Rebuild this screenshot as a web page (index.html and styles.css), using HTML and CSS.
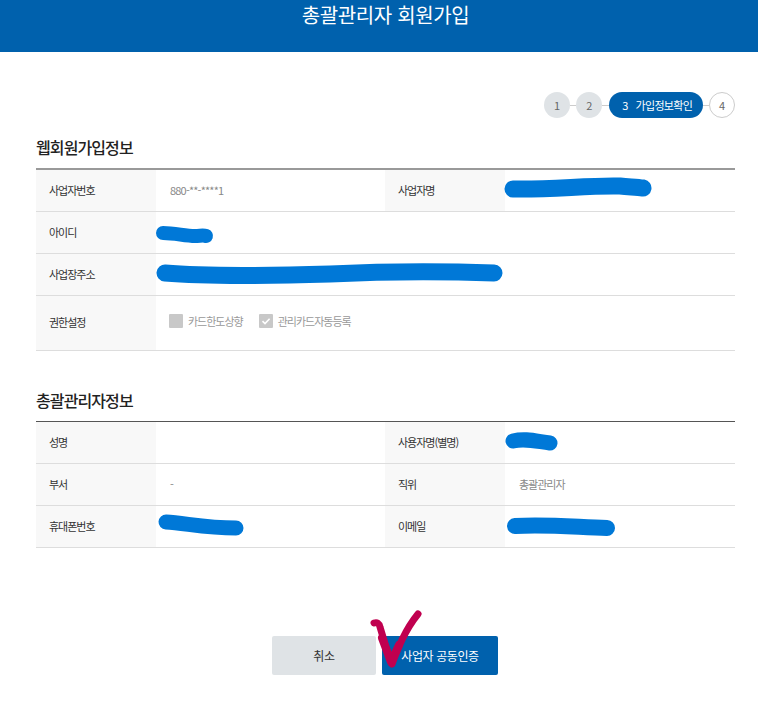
FILE: index.html
```html
<!DOCTYPE html>
<html lang="ko">
<head>
    <meta charset="UTF-8">
    <meta name="viewport" content="width=device-width, initial-scale=1.0">
    <title>총괄관리자 회원가입</title>
    <link rel="stylesheet" href="styles.css">
</head>
<body>
    <header class="page-header">
        <h1>총괄관리자 회원가입</h1>
    </header>

    <main class="content">
        <div class="steps">
            <span class="step done">1</span>
            <span class="step-line"></span>
            <span class="step done">2</span>
            <span class="step-line"></span>
            <span class="step current"><b>3</b>가입정보확인</span>
            <span class="step-line"></span>
            <span class="step todo">4</span>
        </div>

        <h2 class="section-title first">웹회원가입정보</h2>
        <table class="info-table strong">
            <colgroup>
                <col class="col-head"><col class="col-left"><col class="col-head"><col>
            </colgroup>
            <tr>
                <th>사업자번호</th>
                <td class="num">880-**-****1</td>
                <th>사업자명</th>
                <td></td>
            </tr>
            <tr>
                <th>아이디</th>
                <td colspan="3"></td>
            </tr>
            <tr>
                <th>사업장주소</th>
                <td colspan="3"></td>
            </tr>
            <tr class="tall">
                <th>권한설정</th>
                <td colspan="3">
                    <div class="checks">
                        <span class="check"><i class="box"></i>카드한도상향</span>
                        <span class="check">
                            <i class="box">
                                <svg viewBox="0 0 14 14" width="14" height="14"><path d="M3.5 7.2 6 9.6 10.6 4.8" fill="none" stroke="#fff" stroke-width="1.6"/></svg>
                            </i>관리카드자동등록
                        </span>
                    </div>
                </td>
            </tr>
        </table>

        <h2 class="section-title second">총괄관리자정보</h2>
        <table class="info-table dark">
            <colgroup>
                <col class="col-head"><col class="col-left"><col class="col-head"><col>
            </colgroup>
            <tr>
                <th>성명</th>
                <td></td>
                <th>사용자명(별명)</th>
                <td></td>
            </tr>
            <tr>
                <th>부서</th>
                <td>-</td>
                <th>직위</th>
                <td>총괄관리자</td>
            </tr>
            <tr>
                <th>휴대폰번호</th>
                <td></td>
                <th>이메일</th>
                <td></td>
            </tr>
        </table>

        <div class="buttons">
            <button class="btn btn-cancel">취소</button>
            <button class="btn btn-primary">사업자 공동인증</button>
        </div>
    </main>

    <!-- marker pen scribbles drawn over the screenshot -->
    <svg class="scribbles" viewBox="0 0 758 720" width="758" height="720">
        <g fill="none" stroke="#0078d7" stroke-linecap="round" stroke-linejoin="round">
            <path stroke-width="17" d="M513 189C550 190 590 185 620 186 630 187 637 187 643 188"/>
            <path stroke-width="14" d="M163 233C175 233 185 236 195 236 200 236 203 235 206 236"/>
            <path stroke-width="17" d="M165 273C200 276 260 276 330 274 390 271 440 271 494 273"/>
            <path stroke-width="15" d="M513 441C525 438 535 441 550 443"/>
            <path stroke-width="15" d="M166 522C185 523 205 528 236 528"/>
            <path stroke-width="16" d="M515 526C545 524 575 527 607 528"/>
        </g>
        <path d="M374 623C377 622 379 623 380 627 384 640 387 652 392 664 398 648 405 630 418 614" fill="none" stroke="#c0004f" stroke-width="7" stroke-linecap="round" stroke-linejoin="round"/>
        <path d="M382 638 391 662 399 645" fill="none" stroke="#c0004f" stroke-width="8" stroke-linecap="round" stroke-linejoin="round"/>
    </svg>
</body>
</html>
```

FILE: styles.css
```css
* {
    box-sizing: border-box;
}
body {
    margin: 0;
    position: relative;
    height: 720px;
    overflow: hidden;
    font-family: "Noto Sans CJK KR", "Noto Sans", sans-serif;
    color: #333;
    background: #fff;
}
.page-header {
    height: 52px;
    padding: 4px 0 0 13px;
    background: #0061ad;
}
.page-header h1 {
    margin: 0;
    text-align: center;
    font-size: 20px;
    font-weight: 400;
    line-height: 21px;
    letter-spacing: -0.35px;
    color: #fff;
}
.content {
    padding: 40px 23px 0 36px;
}
.steps {
    display: flex;
    justify-content: flex-end;
    align-items: center;
    height: 26px;
}
.step {
    display: flex;
    align-items: center;
    justify-content: center;
    height: 26px;
    min-width: 26px;
    border-radius: 13px;
    font-size: 11px;
    color: #666;
}
.step.done {
    background: #dfe3e6;
}
.step.current {
    width: 94px;
    padding-left: 3px;
    background: #0061ad;
    color: #fff;
    letter-spacing: -0.7px;
}
.step.current b {
    font-weight: 400;
    margin-right: 8px;
}
.step.todo {
    background: #fff;
    border: 1px solid #ccc;
}
.step-line {
    width: 6.33px;
    height: 1px;
    background: #ccc;
}
.section-title {
    margin: 0;
    font-size: 16px;
    font-weight: 500;
    line-height: 24px;
    letter-spacing: -0.9px;
    color: #222;
}
.section-title.first {
    margin-top: 17px;
    margin-bottom: 9px;
}
.section-title.second {
    margin-top: 37px;
    margin-bottom: 9px;
}
.info-table {
    width: 699px;
    table-layout: fixed;
    border-collapse: collapse;
    font-size: 11px;
    letter-spacing: -1px;
}
.info-table.strong {
    border-top: 2px solid #999;
}
.info-table.dark {
    border-top: 1px solid #555;
}
.col-head {
    width: 120px;
}
.col-left {
    width: 229px;
}
.info-table tr {
    height: 42px;
    border-bottom: 1px solid #ddd;
}
.info-table tr.tall {
    height: 55px;
}
.info-table th {
    padding: 0 0 1px 13px;
    background: #f8f8f8;
    text-align: left;
    font-weight: 400;
    color: #333;
}
.info-table td {
    padding: 0 0 1px 14px;
    color: #888;
}
.info-table td.num {
    letter-spacing: -0.8px;
}
.checks {
    display: flex;
    gap: 16px;
    margin-bottom: 3px;
    margin-left: -1px;
}
.check {
    display: flex;
    align-items: center;
    gap: 5px;
    color: #999;
}
.box {
    display: block;
    width: 14px;
    height: 14px;
    background: #c8c8c8;
    border-radius: 1px;
}
.box svg {
    display: block;
}
.buttons {
    display: flex;
    justify-content: center;
    gap: 6px;
    margin-top: 88px;
    margin-left: -1px;
}
.btn {
    height: 39px;
    border: none;
    border-radius: 2px;
    font-family: inherit;
    font-size: 12px;
    letter-spacing: -0.4px;
}
.btn-cancel {
    width: 104px;
    background: #dfe3e6;
    color: #333;
}
.btn-primary {
    width: 116px;
    background: #0061ad;
    color: #fff;
}
.scribbles {
    position: absolute;
    left: 0;
    top: 0;
    pointer-events: none;
}
```
